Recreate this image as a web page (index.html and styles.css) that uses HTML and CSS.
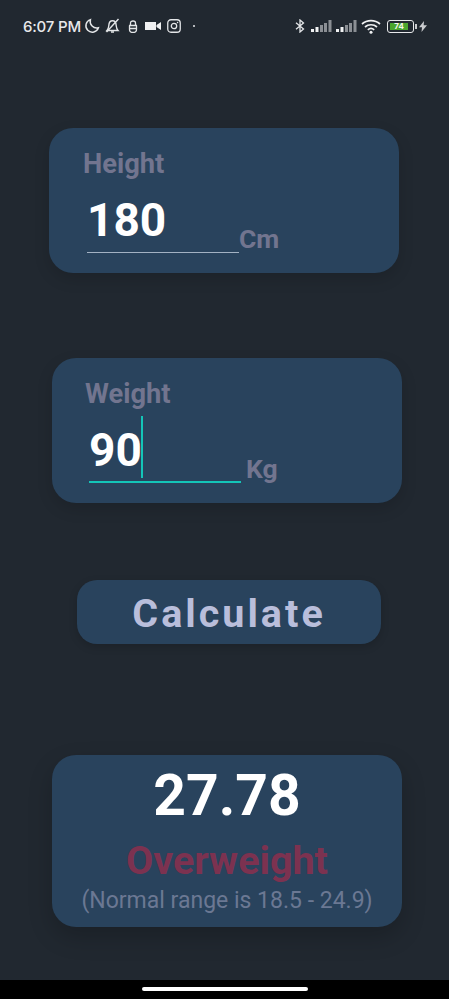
FILE: index.html
```html
<!DOCTYPE html>
<html lang="en">
  <head>
    <meta charset="UTF-8" />
    <meta name="viewport" content="width=device-width, initial-scale=1.0" />
    <title>BMI Calculator</title>
    <link rel="stylesheet" href="styles.css">
  </head>
  <body>
    <div class="status-bar">
      <div class="status-left">
        <span class="clock">6:07 PM</span>
        <svg class="icon" width="16" height="16" viewBox="0 0 15 15"><path d="M6 1.500a6 6 0 1 0 7.500 7.600A6.200 6.200 0 0 1 6 1.500z" fill="none" stroke="#e4e6e8" stroke-width="1.400"/></svg>
        <svg class="icon gap-bell" width="15" height="16" viewBox="0 0 15 16"><path d="M2 12.500c1.500-1.500 1.600-3 1.800-5C4 4.500 5.500 2.800 7.500 2.800s3.500 1.700 3.700 4.700c.2 2 .3 3.500 1.800 5z" fill="none" stroke="#e4e6e8" stroke-width="1.400"/><path d="M6 14h3M13.500 1 1.500 14" stroke="#e4e6e8" stroke-width="1.400"/></svg>
        <svg class="icon gap-s" width="10" height="13" viewBox="0 0 10 13"><path d="M2.500 5V3a2.500 2 0 0 1 5 0v2M1 5.500h8M1.500 5.500v4a3.500 3 0 0 0 7 0v-4M1.500 8.500h7" fill="none" stroke="#e4e6e8" stroke-width="1.300"/></svg>
        <svg class="icon gap-cam" width="16" height="10" viewBox="0 0 16 10"><path d="M0 1h11v8H0zM11.500 4 16 1v8l-4.500-3z" fill="#f0f1f2"/></svg>
        <svg class="icon gap-ig" width="14" height="14" viewBox="0 0 13 13"><rect x=".7" y=".7" width="11.600" height="11.600" rx="3" fill="none" stroke="#e4e6e8" stroke-width="1.200"/><circle cx="6.500" cy="6.500" r="2.500" fill="none" stroke="#e4e6e8" stroke-width="1.200"/><circle cx="9.800" cy="3.200" r=".7" fill="#e4e6e8"/></svg>
        <span class="dot"></span>
      </div>
      <div class="status-right">
        <svg width="10" height="14" viewBox="0 0 10 14"><path d="M1 3.800 8.500 10 5 13V1l3.500 3L1 10.200" fill="none" stroke="#e4e6e8" stroke-width="1.300"/></svg>
        <svg class="signal" width="21" height="12" viewBox="0 0 21 12"><rect x="0" y="9" width="3" height="3" fill="#f0f1f2"/><rect x="4.500" y="7" width="3" height="5" fill="#f0f1f2"/><rect x="9" y="5" width="3" height="7" fill="#8b8f94"/><rect x="13" y="3" width="3" height="9" fill="#8b8f94"/><rect x="17.500" y="0" width="3" height="12" fill="#8b8f94"/></svg>
        <svg class="signal-2" width="21" height="12" viewBox="0 0 21 12"><rect x="0" y="9" width="3" height="3" fill="#f0f1f2"/><rect x="4.500" y="7" width="3" height="5" fill="#f0f1f2"/><rect x="9" y="5" width="3" height="7" fill="#8b8f94"/><rect x="13" y="3" width="3" height="9" fill="#8b8f94"/><rect x="17.500" y="0" width="3" height="12" fill="#8b8f94"/></svg>
        <svg class="wifi" width="20" height="15" viewBox="0 0 20 15"><path d="M1 5c5-4.500 13-4.500 18 0M4 8c3.300-3 8.700-3 12 0M6.800 10.800c1.800-1.500 4.600-1.500 6.400 0" fill="none" stroke="#f0f1f2" stroke-width="1.700"/><circle cx="10" cy="13.300" r="1.500" fill="#f0f1f2"/></svg>
        <div class="battery">
          <div class="battery-fill">74</div>
        </div>
        <span class="battery-tip"></span>
        <svg class="bolt" width="8" height="11" viewBox="0 0 8 11"><path d="M5 0 0 6.200h3L2.500 11 8 4.300H4.700z" fill="#c9cbce"/></svg>
      </div>
    </div>

    <div class="card card-height">
      <div class="label">Height</div>
      <div class="field-row">
        <div class="field">180</div>
        <span class="unit">Cm</span>
      </div>
    </div>

    <div class="card card-weight">
      <div class="label">Weight</div>
      <div class="field-row">
        <div class="field field-active">90<span class="cursor"></span></div>
        <span class="unit unit-kg">Kg</span>
      </div>
    </div>

    <div class="calc-btn">Calculate</div>

    <div class="card card-result">
      <div class="bmi">27.78</div>
      <div class="category">Overweight</div>
      <div class="range">(Normal range is 18.5 - 24.9)</div>
    </div>

    <div class="spacer"></div>

    <div class="nav-bar">
      <div class="home-pill"></div>
    </div>
  </body>
</html>
```

FILE: styles.css
```css
html,
body {
  margin: 0;
  padding: 0;
}

body {
  width: 449px;
  height: 999px;
  overflow: hidden;
  display: flex;
  flex-direction: column;
  align-items: flex-start;
  background-color: #212830;
  font-family: Roboto, "Liberation Sans", sans-serif;
}

/* status bar */
.status-bar {
  box-sizing: border-box;
  width: 100%;
  height: 52px;
  padding: 0 22px 0 23px;
  display: flex;
  justify-content: space-between;
  align-items: center;
}
.status-left,
.status-right {
  display: flex;
  align-items: center;
}
.clock {
  color: #e8e9eb;
  font-family: Inter, Roboto, sans-serif;
  font-size: 15px;
  font-weight: 500;
  letter-spacing: -0.2px;
}
.icon {
  margin-left: 3px;
}
.gap-bell {
  margin-left: 5px;
}
.gap-s {
  margin-left: 8px;
}
.gap-cam {
  margin-left: 7px;
}
.gap-ig {
  margin-left: 6px;
}
.dot {
  width: 2px;
  height: 2px;
  margin-left: 12px;
  border-radius: 50%;
  background-color: #e4e6e8;
}
.signal {
  margin-left: 6px;
}
.signal-2 {
  margin-left: 4px;
}
.wifi {
  margin-left: 4px;
}
.battery {
  box-sizing: border-box;
  width: 27px;
  height: 13px;
  margin-left: 6px;
  padding: 2px;
  border: 1px solid #e8e9eb;
  border-radius: 3px;
}
.battery-fill {
  width: 18px;
  height: 7px;
  background-color: #4aa52e;
  color: #f3f7ee;
  font-family: Inter, Roboto, sans-serif;
  font-size: 8px;
  font-weight: 700;
  line-height: 7px;
  text-align: center;
}
.battery-tip {
  width: 2px;
  height: 5px;
  margin-left: 1px;
  background-color: #c9cbce;
}
.bolt {
  margin-left: 2px;
}

/* cards */
.card {
  box-sizing: border-box;
  width: 350px;
  background-color: #29435d;
  border-radius: 24px;
  box-shadow: 0 6px 16px rgba(0, 0, 0, 0.14);
}
.card-height {
  height: 145px;
  margin: 76px 0 0 49px;
  padding: 20px 0 0 34px;
}
.card-weight {
  height: 145px;
  margin: 85px 0 0 52px;
  padding: 20px 0 0 33px;
}
.label {
  color: #72758f;
  font-size: 27.300px;
  font-weight: 700;
  line-height: 32px;
}
.field-row {
  display: flex;
  align-items: flex-end;
}
.field {
  box-sizing: border-box;
  width: 152px;
  height: 73px;
  margin-left: 4px;
  padding-top: 14px;
  border-bottom: 1px solid #a3b2c3;
  color: #fff;
  font-size: 46px;
  font-weight: 700;
  line-height: 52px;
}
.field-active {
  position: relative;
  padding-top: 14px;
  border-bottom: 2px solid #14c5b8;
}
.cursor {
  position: absolute;
  left: 52px;
  top: 6px;
  width: 2px;
  height: 62px;
  background-color: #14c5b8;
}
.unit {
  color: #72758f;
  font-size: 26.500px;
  font-weight: 700;
  line-height: 28px;
}
.unit-kg {
  margin-left: 5px;
}

/* button */
.calc-btn {
  box-sizing: border-box;
  width: 304px;
  height: 64px;
  margin: 77px 0 0 77px;
  background-color: #29435d;
  border-radius: 20px;
  box-shadow: 0 3px 8px rgba(0, 0, 0, 0.16);
  color: #b9bedb;
  font-size: 39.500px;
  font-weight: 700;
  letter-spacing: 3px;
  line-height: 68px;
  text-align: center;
}

/* result */
.card-result {
  height: 172px;
  margin: 111px 0 0 52px;
  padding-top: 9px;
  text-align: center;
  box-shadow: 0 10px 24px rgba(0, 0, 0, 0.2);
}
.bmi {
  color: #fff;
  font-size: 57px;
  font-weight: 700;
  line-height: 64px;
}
.category {
  color: #7c3250;
  font-size: 39.500px;
  font-weight: 700;
  line-height: 50px;
  padding-top: 8px;
}
.range {
  color: #6b7893;
  font-size: 23px;
  line-height: 30px;
}

.spacer {
  flex: 1;
}

.nav-bar {
  width: 100%;
  height: 19px;
  padding-top: 7px;
  box-sizing: border-box;
  background-color: #000;
  display: flex;
  justify-content: center;
}
.home-pill {
  width: 166px;
  height: 4px;
  border-radius: 2px;
  background-color: #fff;
}
```
